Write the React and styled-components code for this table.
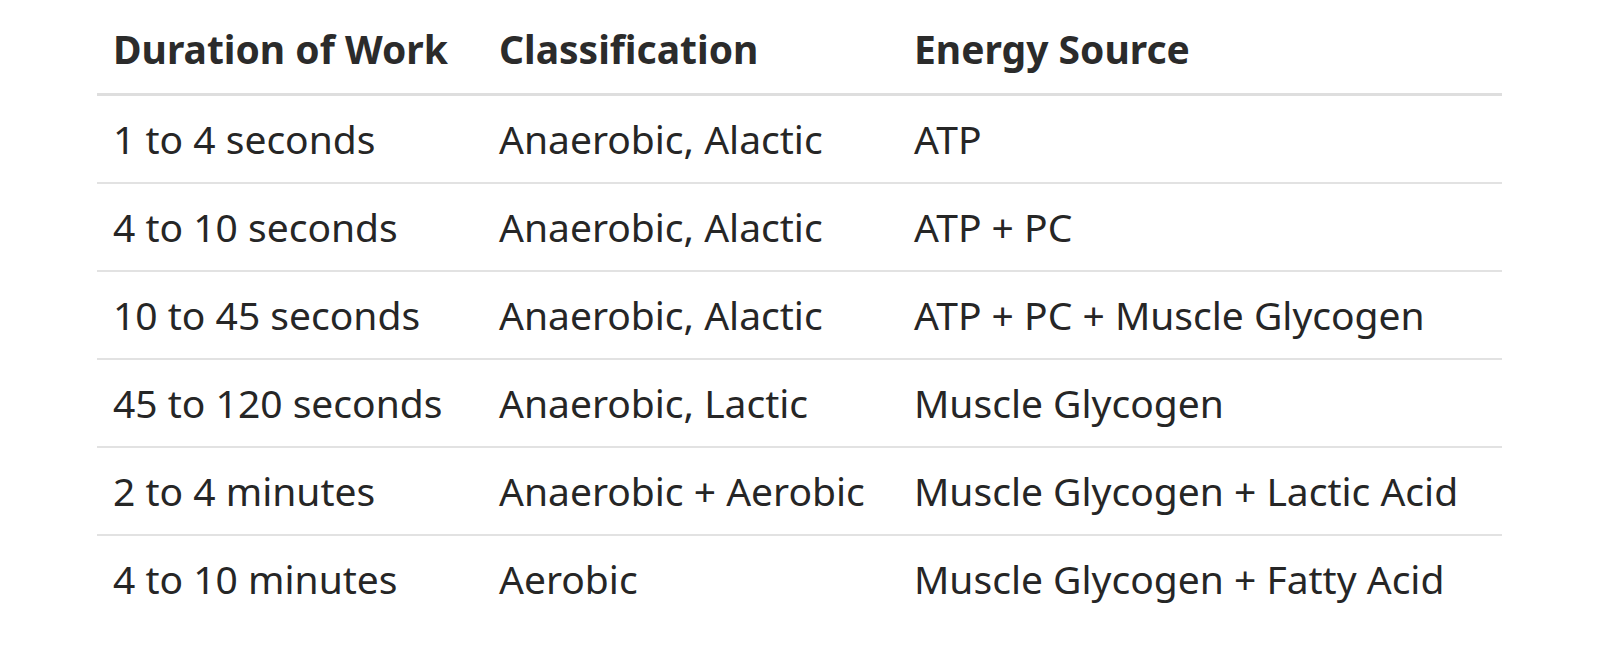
import React from "react";
import styled, { createGlobalStyle } from "styled-components";

const Global = createGlobalStyle`
  html, body { margin: 0; padding: 0; background: #ffffff; }
  body { font-family: "Noto Sans", "Open Sans", sans-serif; color: #2a2a2a; }
`;

const Page = styled.div`
  padding: 6px 0 0 97px;
`;

const Table = styled.table`
  width: 1405px;
  border-collapse: collapse;
  table-layout: fixed;
`;

const HeadCell = styled.th`
  text-align: left;
  font-weight: 700;
  font-size: 39px;
  line-height: 1.2;
  color: #2b2b2b;
  height: 87px;
  padding: 0 0 0 16px;
  border-bottom: 3px solid #dedede;
  vertical-align: middle;
  white-space: nowrap;
`;

const Row = styled.tr`
  border-bottom: ${(p) => (p.$last ? "none" : "2px solid #e2e2e2")};
`;

const Cell = styled.td`
  font-size: 39px;
  font-weight: 400;
  line-height: 1.2;
  color: #262626;
  height: 86px;
  padding: 0 0 0 16px;
  vertical-align: middle;
  white-space: nowrap;
`;

const cols = [386, 415, 604];

const rows = [
  ["1 to 4 seconds", "Anaerobic, Alactic", "ATP"],
  ["4 to 10 seconds", "Anaerobic, Alactic", "ATP + PC"],
  ["10 to 45 seconds", "Anaerobic, Alactic", "ATP + PC + Muscle Glycogen"],
  ["45 to 120 seconds", "Anaerobic, Lactic", "Muscle Glycogen"],
  ["2 to 4 minutes", "Anaerobic + Aerobic", "Muscle Glycogen + Lactic Acid"],
  ["4 to 10 minutes", "Aerobic", "Muscle Glycogen + Fatty Acid"],
];

export default function App() {
  return (
    <>
      <Global />
      <Page>
        <Table>
          <colgroup>
            {cols.map((w, i) => (
              <col key={i} style={{ width: w }} />
            ))}
          </colgroup>
          <thead>
            <tr>
              <HeadCell>Duration of Work</HeadCell>
              <HeadCell>Classification</HeadCell>
              <HeadCell>Energy Source</HeadCell>
            </tr>
          </thead>
          <tbody>
            {rows.map((r, i) => (
              <Row key={i} $last={i === rows.length - 1}>
                {r.map((c, j) => (
                  <Cell key={j}>{c}</Cell>
                ))}
              </Row>
            ))}
          </tbody>
        </Table>
      </Page>
    </>
  );
}
